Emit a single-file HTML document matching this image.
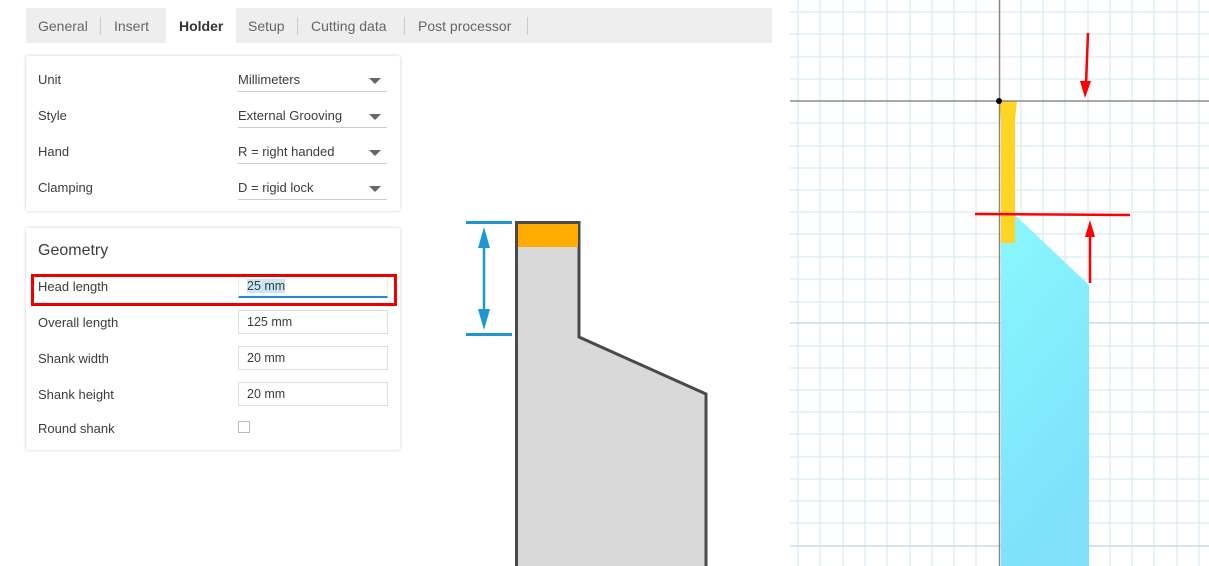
<!DOCTYPE html>
<html><head><meta charset="utf-8"><style>
*{box-sizing:border-box;margin:0;padding:0}
body{width:1209px;height:566px;background:#fff;font-family:"Liberation Sans",sans-serif;font-size:13px;color:#3c3c3c;position:relative;overflow:hidden}
.abs{position:absolute}
.tabs{left:26px;top:8px;width:746px;height:35px;background:#eeeeee}
.tab{position:absolute;top:0;height:35px;line-height:36px;font-size:14px;color:#666}
.sep{position:absolute;top:9px;width:1px;height:18px;background:#ccc}
.panel{position:absolute;left:26px;width:374px;background:#fff;box-shadow:0 0 3px rgba(0,0,0,.2);border-radius:2px}
.lbl{position:absolute;left:12px;font-size:13px;color:#3c3c3c}
.sel{position:absolute;left:212px;width:149px;height:23px;border-bottom:1px solid #ccc;font-size:13px;padding-top:3px}
.sel:after{content:"";position:absolute;right:6px;top:9px;border-left:6px solid transparent;border-right:6px solid transparent;border-top:6px solid #666}
.inp{position:absolute;left:212px;width:150px;height:24px;border:1px solid #ddd;padding:4px 8px;font-size:12.5px}
</style></head><body>
<div class="abs tabs">
<div class="tab" style="left:12px">General</div><div class="sep" style="left:74px"></div>
<div class="tab" style="left:88px">Insert</div>
<div class="tab" style="left:140px;width:70px;background:#fff"></div>
<div class="tab" style="left:153px;color:#333;font-weight:bold">Holder</div>
<div class="tab" style="left:222px">Setup</div><div class="sep" style="left:271px"></div>
<div class="tab" style="left:285px">Cutting data</div><div class="sep" style="left:378px"></div>
<div class="tab" style="left:392px">Post processor</div><div class="sep" style="left:501px"></div>
</div>

<div class="panel" style="top:56px;height:155px">
<div class="lbl" style="top:16px">Unit</div><div class="sel" style="top:13px">Millimeters</div>
<div class="lbl" style="top:52px">Style</div><div class="sel" style="top:49px">External Grooving</div>
<div class="lbl" style="top:88px">Hand</div><div class="sel" style="top:85px">R = right handed</div>
<div class="lbl" style="top:124px">Clamping</div><div class="sel" style="top:121px">D = rigid lock</div>
</div>

<div class="panel" style="top:228px;height:222px">
<div class="lbl" style="top:14px;font-size:16px">Geometry</div>
<div class="lbl" style="top:51px">Head length</div>
<div class="inp" style="top:46px;border-color:#eee #eee #1e8fd0 #eee;border-bottom-width:2px"><span style="background:#c8e6f5">25 mm</span></div>
<div class="lbl" style="top:87px">Overall length</div><div class="inp" style="top:82px">125 mm</div>
<div class="lbl" style="top:123px">Shank width</div><div class="inp" style="top:118px">20 mm</div>
<div class="lbl" style="top:159px">Shank height</div><div class="inp" style="top:154px">20 mm</div>
<div class="lbl" style="top:193px">Round shank</div>
<div class="abs" style="left:212px;top:193px;width:12px;height:12px;border:1px solid #bbb"></div>
</div>
<div class="abs" style="left:31px;top:274px;width:366px;height:32px;border:3px solid #e00"></div>

<svg class="abs" style="left:0;top:0" width="1209" height="566">
<line x1="466" y1="222.5" x2="512" y2="222.5" stroke="#1e96d4" stroke-width="3"/>
<line x1="466" y1="334.5" x2="512" y2="334.5" stroke="#1e96d4" stroke-width="3"/>
<line x1="484" y1="240" x2="484" y2="318" stroke="#1e96d4" stroke-width="2.5"/>
<polygon points="484,227 478,248 490,248" fill="#1e96d4"/>
<polygon points="484,330 478,309 490,309" fill="#1e96d4"/>
<polygon points="516.5,222.5 579,222.5 579,337 706,394 706,570 516.5,570" fill="#d9d9d9" stroke="#4a4a4a" stroke-width="3"/>
<rect x="518" y="224" width="60" height="23" fill="#ffab00"/>
<g stroke="#d6ecf5" stroke-width="1.2">
<line x1="798" y1="0" x2="798" y2="566"/><line x1="820" y1="0" x2="820" y2="566"/><line x1="843" y1="0" x2="843" y2="566"/><line x1="865" y1="0" x2="865" y2="566"/><line x1="887" y1="0" x2="887" y2="566"/><line x1="910" y1="0" x2="910" y2="566"/><line x1="932" y1="0" x2="932" y2="566"/><line x1="954" y1="0" x2="954" y2="566"/><line x1="976" y1="0" x2="976" y2="566"/><line x1="1021" y1="0" x2="1021" y2="566"/><line x1="1043" y1="0" x2="1043" y2="566"/><line x1="1065" y1="0" x2="1065" y2="566"/><line x1="1088" y1="0" x2="1088" y2="566"/><line x1="1110" y1="0" x2="1110" y2="566"/><line x1="1132" y1="0" x2="1132" y2="566"/><line x1="1154" y1="0" x2="1154" y2="566"/><line x1="1177" y1="0" x2="1177" y2="566"/><line x1="1199" y1="0" x2="1199" y2="566"/>
<line x1="790" y1="12" x2="1209" y2="12"/><line x1="790" y1="34" x2="1209" y2="34"/><line x1="790" y1="57" x2="1209" y2="57"/><line x1="790" y1="79" x2="1209" y2="79"/><line x1="790" y1="123" x2="1209" y2="123"/><line x1="790" y1="146" x2="1209" y2="146"/><line x1="790" y1="168" x2="1209" y2="168"/><line x1="790" y1="190" x2="1209" y2="190"/><line x1="790" y1="212" x2="1209" y2="212"/><line x1="790" y1="234" x2="1209" y2="234"/><line x1="790" y1="257" x2="1209" y2="257"/><line x1="790" y1="279" x2="1209" y2="279"/><line x1="790" y1="302" x2="1209" y2="302"/><line x1="790" y1="346" x2="1209" y2="346"/><line x1="790" y1="368" x2="1209" y2="368"/><line x1="790" y1="390" x2="1209" y2="390"/><line x1="790" y1="412" x2="1209" y2="412"/><line x1="790" y1="434" x2="1209" y2="434"/><line x1="790" y1="457" x2="1209" y2="457"/><line x1="790" y1="479" x2="1209" y2="479"/><line x1="790" y1="501" x2="1209" y2="501"/><line x1="790" y1="523" x2="1209" y2="523"/>
</g>
<g stroke="#b9d8e6" stroke-width="1.2"><line x1="790" y1="323" x2="1209" y2="323"/><line x1="790" y1="546" x2="1209" y2="546"/></g>
<defs><linearGradient id="cg" x1="0" y1="0" x2="0.3" y2="1"><stop offset="0" stop-color="#8af8fd"/><stop offset="1" stop-color="#7ee0fb"/></linearGradient></defs>
<polygon points="1001,215 1015,215 1089,285 1089,566 1001,566" fill="url(#cg)"/>
<path d="M999,101 L1017,101 L1015,120 L1015,243 L1001,243 L1001,120 Z" fill="#ffd524"/>
<line x1="790" y1="101" x2="1209" y2="101" stroke="#777" stroke-width="1.3"/>
<line x1="999.5" y1="0" x2="999.5" y2="566" stroke="#888" stroke-width="1.5"/>
<circle cx="999" cy="101" r="3" fill="#000"/>
<line x1="975" y1="214" x2="1130" y2="215" stroke="#f00" stroke-width="2.5"/>
<line x1="1088" y1="33" x2="1086" y2="84" stroke="#f00" stroke-width="2.5"/>
<polygon points="1085,98 1080,81 1091,81" fill="#f00"/>
<line x1="1090" y1="283" x2="1090" y2="234" stroke="#f00" stroke-width="2.5"/>
<polygon points="1090,220 1085,237 1095,237" fill="#f00"/>
</svg>
</body></html>
